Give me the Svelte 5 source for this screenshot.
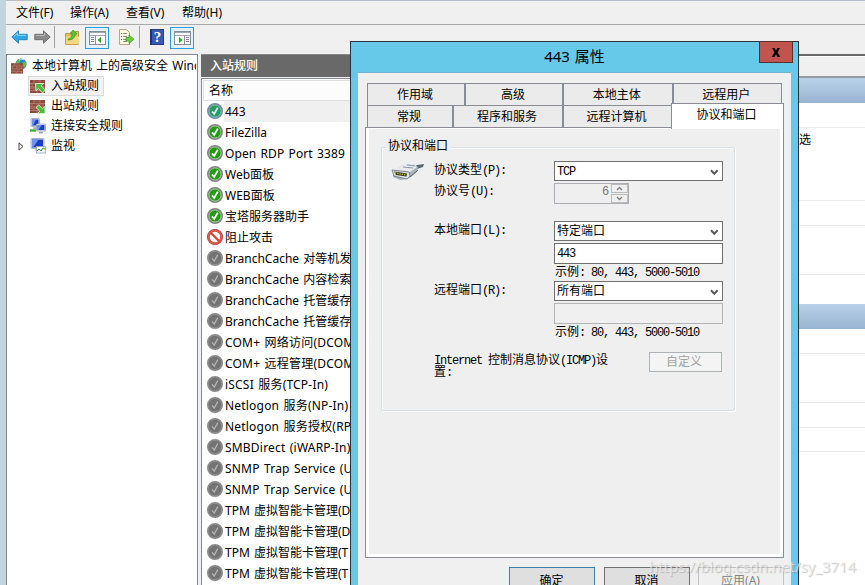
<script>
  const menus = ['文件(F)', '操作(A)', '查看(V)', '帮助(H)'];
  const rules = [
    ['443', 'sel'],
    ['FileZilla', 'on'],
    ['Open RDP Port 3389', 'on'],
    ['Web面板', 'on'],
    ['WEB面板', 'on'],
    ['宝塔服务器助手', 'on'],
    ['阻止攻击', 'block'],
    ['BranchCache 对等机发', 'off'],
    ['BranchCache 内容检索', 'off'],
    ['BranchCache 托管缓存', 'off'],
    ['BranchCache 托管缓存', 'off'],
    ['COM+ 网络访问(DCOM', 'off'],
    ['COM+ 远程管理(DCOM', 'off'],
    ['iSCSI 服务(TCP-In)', 'off'],
    ['Netlogon 服务(NP-In)', 'off'],
    ['Netlogon 服务授权(RP', 'off'],
    ['SMBDirect (iWARP-In)', 'off'],
    ['SNMP Trap Service (U', 'off'],
    ['SNMP Trap Service (U', 'off'],
    ['TPM 虚拟智能卡管理(D', 'off'],
    ['TPM 虚拟智能卡管理(D', 'off'],
    ['TPM 虚拟智能卡管理(T', 'off'],
    ['TPM 虚拟智能卡管理(T', 'off']
  ];
  const ring = { sel: '#7390a3', on: '#858585', off: '#8a8a8a' };
  const disc = { sel: '#279b60', on: '#239b12', off: '#737373' };
  const tick = { sel: '#d8f2f4', on: '#ffffff', off: '#b5b5b5' };

  // Latin runs sit on a half-width grid, ideographs on a full-width one.
  function runs(s) {
    return s.match(/[\x20-\x7e]+|[^\x20-\x7e]+/g).map((t) => ({ t, half: t.charCodeAt(0) < 127 }));
  }
</script>

{#snippet grid(s)}{#each runs(s) as r}<span class:half={r.half}>{r.t}</span>{/each}{/snippet}

{#snippet chevron()}
  <svg class="chev" width="9" height="7" viewBox="0 0 9 7"><path d="M1 1.3 4.3 4.8 7.6 1.3" fill="none" stroke="#5a5a5a" stroke-width="2" /></svg>
{/snippet}

{#snippet bricks()}
  <rect x="0" y="1" width="15" height="13" fill="#8e4a3a" />
  <path d="M0 4.5h15M0 8h15M0 11.5h15M4 1v3.5M10 1v3.5M7 4.5V8M13 4.5V8M2 4.5V8M4 8v3.5M10 8v3.5M7 11.5V14M13 11.5V14" stroke="#b98d80" stroke-width=".7" />
  <path d="M5 2.2h4M8 5.8h4M0 9.5h3M5 9.5h4" stroke="#ad6452" />
{/snippet}

{#snippet monitor(x, y, w, h)}
  <rect {x} {y} width={w} height={h} rx=".6" fill="#dfe4ec" stroke="#9aa5b8" stroke-width=".8" />
  <rect x={x + 1} y={y + 1} width={w - 2} height={h - 2} fill="#1c3fc0" />
  <path d={`M${x + 1} ${y + 1}h${(w - 2) * 0.6}L${x + 2} ${y + h - 1}h-1z`} fill="#6e93ee" />
  <path d={`M${x + w / 2 - 2} ${y + h + 1.6}h4`} stroke="#9aa5b8" stroke-width="1.6" />
{/snippet}

{#snippet paneIcon(right)}
  <svg width="17" height="14" viewBox="0 0 17 14">
    <rect x=".5" y=".5" width="16" height="13" fill="#fff" stroke="#858d98" />
    <path d="M1 1.5h15M1 4.5h15" stroke="#9da7b5" />
    <path d="M11 2.5h1M13 2.5h1M15 2.5h1" stroke="#fff" />
    {#if right}
      <path d="M10.5 5v8" stroke="#858d98" /><path d="M12 6.5h3M12 8.5h3M12 10.5h3" stroke="#6b87ae" /><path d="M5 6v6l3.5-3z" fill="#2da321" />
    {:else}
      <path d="M6.5 5v8" stroke="#858d98" /><path d="M2 6.5h3M2 8.5h3M2 10.5h3" stroke="#6b87ae" /><path d="M12 6v6L8.5 9z" fill="#2da321" />
    {/if}
  </svg>
{/snippet}

<div class="screen">
  <div class="edge"></div>
  <div class="window">
    <nav class="menu">{#each menus as m}<span>{m}</span>{/each}</nav>
    <div class="toolbar">
      <svg class="back" width="17" height="14" viewBox="0 0 17 14"><path d="M.8 7 7.5 .8V4.3h8.7v5.4H7.5v3.5z" fill="#31a7e4" stroke="#2686bd" /><path d="M2.8 6.6 6.6 3v2.3h8.4" fill="none" stroke="#8ed7f8" /></svg>
      <svg class="fwd" width="17" height="14" viewBox="0 0 17 14"><path d="M16.2 7 9.5 .8V4.3H.8v5.4h8.7v3.5z" fill="#8a8a8a" stroke="#707070" /><path d="M1.8 5.5h8.7V3" fill="none" stroke="#b5b5b5" /></svg>
      <i class="sep s1"></i>
      <svg class="folder" width="15" height="16" viewBox="0 0 15 16"><path d="M.5 4.500h4l1-1h3v-1h5v12.900H.5z" fill="#e3bd62" stroke="#c49a45" /><path d="M1 7.500h13v7.500H1z" fill="#f3d686" /><path d="M3 10c3-.5 4-2.500 4-5H5l3-4 4 4h-2c0 4-2.500 6-7 6z" fill="#55c52d" stroke="#2f8f18" stroke-width=".6" /></svg>
      <span class="tbtn b1">{@render paneIcon(false)}</span>
      <svg class="export" width="17" height="16" viewBox="0 0 17 16"><path d="M1.500 .5h7l3 3v12h-10z" fill="#fffbe5" stroke="#b5a97c" /><path d="M5 4.500h4M5 7.500h4M5 10.500h4M5 12.500h4" stroke="#8a8a8a" /><path d="M3 4.500h1M3 7.500h1M3 10.500h1" stroke="#555" /><path d="M8 8.500h3V6l5 4.300-5 4.200V12H8z" fill="#69cf3b" stroke="#359a21" stroke-width=".7" /></svg>
      <i class="sep s2"></i>
      <span class="help">?</span>
      <span class="tbtn b2">{@render paneIcon(true)}</span>
    </div>

    <div class="panes">
      <div class="tree">
        <div class="node root">
          <svg width="17" height="16" viewBox="0 0 17 16"><circle cx="10" cy="6" r="5.500" fill="#2386d6" /><path d="M7 1.500c3-1 3 2 1 3.500S5 8 5 5zM11 5l4-2c1 3 0 6-2 7z" fill="#63bd45" /><path d="M8 2c2-1 4-1 5 0" stroke="#bfe7ff" fill="none" /><svg x="0" y="4" width="12" height="12" viewBox="0 0 15 14">{@render bricks()}</svg></svg>
          <span class="name">本地计算机 上的高级安全 Windows</span>
        </div>
        <div class="node child">
          <span class="hit"><svg width="16" height="15" viewBox="0 0 16 15">{@render bricks()}<path d="M5.500 4.500h8l-2.300 2.300L15.300 11l-2.800 3L8.300 9.500 6 12z" fill="#4dbb3c" stroke="#d8f0cd" stroke-width=".9" /></svg><span>入站规则</span></span>
        </div>
        <div class="node child">
          <span class="plain"><svg width="16" height="15" viewBox="0 0 16 15">{@render bricks()}<path d="M15 14.500H7.500l2.300-2.300L6 8.500 8.800 6l3.700 3.700L15 7.500z" fill="#4dbb3c" stroke="#d8f0cd" stroke-width=".9" /></svg><span>出站规则</span></span>
        </div>
        <div class="node child">
          <span class="plain"><svg width="16" height="16" viewBox="0 0 16 16">{@render monitor(1, 0.5, 8.5, 8)}{@render monitor(6.5, 6, 9, 7)}<path d="M0 12.500h6" stroke="#42ad35" stroke-width="2.400" /></svg><span>连接安全规则</span></span>
        </div>
        <div class="node child">
          <svg class="twist" width="6" height="9" viewBox="0 0 6 9"><path d="M1 .8v7.400l4-3.700z" fill="#fff" stroke="#444" /></svg>
          <span class="plain"><svg width="16" height="16" viewBox="0 0 16 16">{@render monitor(1, 0.5, 13, 10)}<rect x="6.500" y="8.500" width="9" height="6.500" fill="#f5fbff" stroke="#8fa9bd" stroke-width=".8" /><path d="m7 13 2-2 2 2 2-3 2 1" stroke="#38a132" fill="none" /></svg><span>监视</span></span>
        </div>
      </div>

      <div class="middle">
        <div class="caption">入站规则</div>
        <div class="list">
          <div class="colhead">名称</div>
          {#each rules as [name, kind]}
            <div class="rule">
              <svg width="16" height="16" viewBox="0 0 16 16">
                {#if kind === 'block'}
                  <circle cx="8" cy="8" r="6.700" fill="#fff" stroke="#a93a35" stroke-width="2.600" /><circle cx="8" cy="8" r="6.500" fill="none" stroke="#e2574e" stroke-width="1.800" /><path d="m3.500 3.500 9 9" stroke="#d9483f" stroke-width="2.400" />
                {:else}
                  <circle cx="8" cy="8" r="7.100" fill={disc[kind]} stroke={ring[kind]} stroke-width="1.800" />
                  {#if kind !== 'off'}<circle cx="8" cy="8" r="6" fill="none" stroke={kind === 'sel' ? '#9cc3cf' : '#c4dcc4'} stroke-width=".7" />{/if}
                  <path d="M5 8.400 7.200 11 10.800 4.600" fill="none" stroke={tick[kind]} stroke-width={kind === 'off' ? 1.3 : 1.8} />
                {/if}
              </svg>
              <span class:picked={kind === 'sel'} class:wide={name.includes('(') && !name.startsWith('TPM')} class:port={name.startsWith('Open')}>{name}</span>
            </div>
          {/each}
        </div>
      </div>

      <div class="actions">
        <div class="acthead"></div>
        <div class="band"></div>
        <div class="line" style="height:25px"></div>
        <div class="line pick" style="height:73px">筛选</div>
        <div class="line" style="height:25px"></div>
        <div class="line" style="height:49px"></div>
        <div class="fill"></div>
        <div class="band"></div>
        <div class="line" style="height:25px"></div>
        <div class="line" style="height:49px"></div>
        <div class="line" style="height:25px"></div>
        <div class="line" style="height:24px"></div>
      </div>
    </div>
  </div>

  <section class="dialog">
    <header>443 属性</header>
    <div class="close"><svg width="10" height="9" viewBox="0 0 10 9"><path d="M1 0h2.500L5 2.500 6.500 0H9L6.500 4.300 9.300 9H6.600L5 6.200 3.400 9H.7l2.800-4.700z" fill="#000" /></svg></div>
    <div class="client">
      <div class="tabs top"><span>作用域</span><span>高级</span><span>本地主体</span><span>远程用户</span></div>
      <div class="tabs low"><span>常规</span><span>程序和服务</span><span>远程计算机</span><span class="active">协议和端口</span></div>
      <div class="page">
        <div class="group">
          <div class="legend">协议和端口</div>
          <div class="form">
            <div class="row r1">
              <svg class="plug" width="34" height="20" viewBox="0 0 34 20">
                <path d="m22 6 4-3 7-1-1 3-6 2z" fill="#596773" />
                <path d="M2 9 12 3l10-1 5 3-1 5-9 7-8 1-7-3z" fill="#a9b2ba" />
                <path d="m3 8 9-5 10-1 4 3-7 5z" fill="#e6ebef" />
                <path d="m12 5 10 1M16 3l8 1" stroke="#8a99a6" />
                <path d="m1 8 17 2 1 4-3 3-13-3z" fill="#dbe0e3" stroke="#6d767d" stroke-width=".8" />
                <path d="m3 9.500 13 2-.5 3L5 13z" fill="#343821" />
                <path d="m4 11 11 2" stroke="#d2c63e" stroke-width="1.300" stroke-dasharray="1.300 1" />
                <path d="m19 15 8-7" stroke="#59646c" />
              </svg>
              <div class="label">{@render grid('协议类型(P):')}</div>
              <div class="select">{@render grid('TCP')}{@render chevron()}</div>
            </div>
            <div class="row r2">
              <div class="label">{@render grid('协议号(U):')}</div>
              <div class="spin">{@render grid('6')}
                <div class="arrows"><i><svg width="7" height="5" viewBox="0 0 7 5"><path d="m1 4 2.500-2.500L6 4" fill="none" stroke="#808080" stroke-width="1.400" /></svg></i><i><svg width="7" height="5" viewBox="0 0 7 5"><path d="m1 1 2.500 2.500L6 1" fill="none" stroke="#808080" stroke-width="1.400" /></svg></i></div>
              </div>
            </div>
            <div class="row r3">
              <div class="label">{@render grid('本地端口(L):')}</div>
              <div class="stack">
                <div class="select">{@render grid('特定端口')}{@render chevron()}</div>
                <div class="input">{@render grid('443')}</div>
                <div class="hint">{@render grid('示例: 80, 443, 5000-5010')}</div>
              </div>
            </div>
            <div class="row r4">
              <div class="label">{@render grid('远程端口(R):')}</div>
              <div class="stack">
                <div class="select">{@render grid('所有端口')}{@render chevron()}</div>
                <div class="input dis"></div>
                <div class="hint">{@render grid('示例: 80, 443, 5000-5010')}</div>
              </div>
            </div>
            <div class="row r5">
              <div class="icmp"><div>{@render grid('Internet 控制消息协议(ICMP)设')}</div><div>{@render grid('置:')}</div></div>
              <div class="custom">自定义</div>
            </div>
          </div>
        </div>
      </div>
      <footer><span class="ok">确定</span><span>取消</span><span class="off">应用(A)</span></footer>
    </div>
  </section>
  <div class="mark">https://blog.csdn.net/sy_3714</div>
</div>

<style>
  * { box-sizing: border-box; }
  .screen { position: relative; width: 865px; height: 585px; overflow: hidden; display: flex; background: #f0f0f0; color: #000; font: 12px/16px "Noto Sans", "Noto Sans CJK SC", sans-serif; word-spacing: 1px; white-space: nowrap; }
  svg { display: block; flex: none; }
  .edge { width: 6px; background: #c3d5dc; flex: none; }
  .window { flex: 1; min-width: 0; display: flex; flex-direction: column; border-top: 1px solid #b4bfca; }
  .menu { height: 24px; display: flex; align-items: center; padding-left: 10px; border-bottom: 1px solid #a9a9a9; flex: none; }
  .menu span { width: 56px; }
  .menu span:nth-child(1) { width: 54px; }
  .toolbar { height: 29px; display: flex; align-items: center; padding: 0 0 5px 5px; flex: none; }
  .fwd { margin-left: 6px; }
  .sep { width: 1px; height: 22px; background: #a0a0a0; }
  .s1 { margin-left: 3px; }
  .folder { margin-left: 10px; }
  .tbtn { width: 24px; height: 22px; border: 1px solid #2a9ee0; background: #e5f1f9; display: flex; align-items: center; justify-content: center; margin-top: 1px; }
  .b1 { margin-left: 5px; }
  .export { margin-left: 9px; }
  .s2 { margin-left: 4px; }
  .help { margin-left: 10px; width: 14px; height: 16px; background: #3858b8; border: 1px solid #253c86; border-left: 2px solid #1f3276; color: #fff; font: bold 15px/14px "Liberation Serif", serif; text-align: center; }
  .b2 { margin-left: 6px; }
  .panes { flex: 1; min-height: 0; display: flex; }
  .tree { width: 192px; border: 1px solid #828790; border-bottom: 0; background: #fff; overflow: hidden; flex: none; padding: 1px 1px 0 0; }
  .node { height: 20px; display: flex; align-items: center; }
  .root { padding-left: 4px; gap: 4px; overflow: hidden; }
  .name { flex: 1; min-width: 0; overflow: hidden; }
  .child { position: relative; padding-left: 21px; }
  .hit, .plain { display: flex; align-items: center; gap: 5px; height: 20px; padding: 0 4px 0 1px; border: 1px solid transparent; }
  .hit { background: #f2f2f2; border-color: #dadada; }
  .twist { position: absolute; left: 11px; top: 6px; }
  .middle { width: 157px; margin-left: 3px; flex: none; display: flex; flex-direction: column; overflow: hidden; }
  .caption { height: 23px; background: #696969; color: #fff; line-height: 22px; padding-left: 9px; border-top: 1px solid #888; font-weight: 500; flex: none; }
  .list { flex: 1; margin-top: 1px; border-left: 1px solid #828790; border-top: 1px solid #828790; background: #fff; padding: 1px 0 0 1px; overflow: hidden; }
  .colhead { height: 21px; border: 1px solid #dedfe1; background: #fcfcfc; padding-left: 5px; line-height: 20px; }
  .rule { height: 21px; display: flex; align-items: center; padding: 0 0 1px 4px; }
  .rule span { flex: 1; height: 21px; line-height: 22px; padding-left: 1px; margin-left: 1px; }
  .rule .picked { background: #f0f0f0; }
  .rule .wide { letter-spacing: .2px; }
  .rule .port { letter-spacing: .1px; }
  .actions { flex: 1; background: #fff; display: flex; flex-direction: column; margin-left: -1px; }
  .acthead { height: 24px; border-top: 2px solid #696969; border-bottom: 2px solid #969ba4; background: #f0f0f0; box-shadow: inset 0 1px #fff; flex: none; }
  .band { height: 25px; background: linear-gradient(#b9d1ea, #99b4d1); flex: none; }
  .line { border-bottom: 1px solid #ececec; flex: none; }
  .pick { padding: 4px 0 0 430px; }
  .fill { height: 29px; flex: none; }
  .dialog { position: absolute; left: 350px; top: 41px; width: 449px; height: 560px; background: #66c9e9; border: 1px solid #25333a; display: flex; flex-direction: column; padding: 0 7px; }
  header { height: 30px; text-align: center; font-size: 15px; line-height: 29px; flex: none; }
  .close { position: absolute; right: 5px; top: -1px; width: 34px; height: 22px; background: #c1554e; border: 1px solid #57312f; display: flex; align-items: center; justify-content: center; }
  .client { flex: 1; background: #f0f0f0; border: 1px solid #79b3ca; border-width: 1px 0 0; padding: 10px 7px 0; display: flex; flex-direction: column; }
  .tabs { display: flex; flex: none; height: 22px; padding-left: 2px; }
  .tabs span { border: 1px solid #898c95; border-bottom: 0; background: #ebebeb; text-align: center; line-height: 22px; width: 98px; padding-right: 2px; }
  .top span:nth-child(3), .top span:nth-child(4) { width: 109.5px; }
  .low span:nth-child(1) { width: 86px; }
  .low span:nth-child(2) { width: 110px; }
  .low span:nth-child(3) { width: 109px; }
  .low .active { position: relative; width: 113px; height: 26px; margin: -2px -3px 0 -1px; background: #fff; line-height: 22px; flex: none; }
  .page { height: 431px; width: 419px; border: 1px solid #898c95; background: #efefef; box-shadow: inset 0 0 0 1px #fff, inset 3px -3px #fff, inset -3px 0 #fff; padding: 19px 0 0 15px; flex: none; }
  .group { width: 354px; height: 264px; border: 1px solid #d7e0e6; border-radius: 2px; box-shadow: 1px 1px #fff, inset 1px 1px #fff; }
  .legend { width: 64px; background: #efefef; margin: -10px 0 1px 5px; padding-left: 1px; height: 16px; }
  .form { padding: 6px 0 0 9px; display: flex; flex-direction: column; }
  .half { font-family: "Liberation Mono", monospace; font-size: 12px; letter-spacing: -1.2px; word-spacing: 0; white-space: pre; }
  .row { display: flex; padding-left: 43px; }
  .label { width: 120px; flex: none; line-height: 17px; }
  .r1 { padding-left: 0; height: 20px; }
  .r1 .label { line-height: 18px; }
  .plug { margin: 1px 9px 0 0; }
  .select { position: relative; width: 169px; height: 20px; border: 1px solid #707070; background: #fff; padding-left: 2px; line-height: 18px; }
  .chev { position: absolute; right: 3px; top: 7px; }
  .r2 { margin-top: 1px; height: 22px; }
  .spin { margin-top: 1px; width: 75px; height: 21px; border: 1px solid #abadb3; color: #777; display: flex; justify-content: flex-end; line-height: 17px; }
  .arrows { width: 17px; display: flex; flex-direction: column; gap: 1px; margin-left: 3px; }
  .arrows i { height: 9px; border: 1px solid #bababa; display: flex; align-items: center; justify-content: center; }
  .r3 { margin-top: 17px; height: 60px; }
  .r4 { height: 60px; }
  .input { margin-top: 2px; width: 169px; height: 21px; border: 1px solid #707070; background: #fff; padding-left: 2px; line-height: 17px; }
  .dis { background: #f0f0f0; border-color: #b0b4b4; }
  .hint { height: 17px; line-height: 15px; padding-left: 1px; }
  .r5 { margin-top: 11px; }
  .icmp { width: 215px; line-height: 12px; padding-top: 2px; }
  .icmp div { height: 12px; }
  .custom { width: 73px; height: 20px; border: 1px solid #adb2b5; background: #f4f4f4; color: #a2a2a2; text-align: center; line-height: 18px; padding-right: 3px; }
  footer { display: flex; justify-content: flex-end; gap: 9px; margin-top: 9px; }
  footer span { width: 86px; height: 28px; border: 1px solid #707070; background: #dfdfdf; text-align: center; line-height: 26px; padding-right: 1px; }
  footer .ok { border-color: #3c7fb1; }
  footer .off { border-color: #bfc3c5; background: #f0f0f0; color: #858585; margin-left: -1px; }
  .mark { position: absolute; left: 649px; top: 556px; font-size: 15px; letter-spacing: -.06px; line-height: 20px; color: rgba(240, 240, 240, .7); text-shadow: 1px 1px 1px rgba(130, 130, 130, .45); }
</style>
